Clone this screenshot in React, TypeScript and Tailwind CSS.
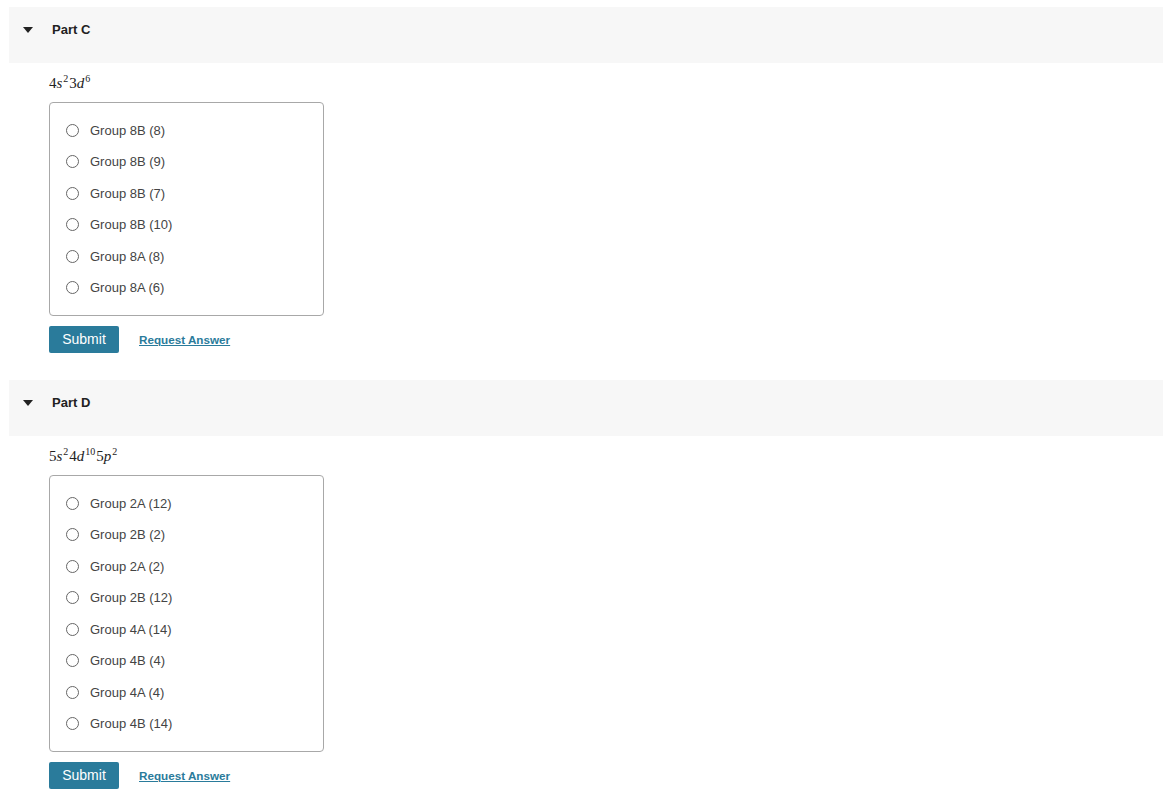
import React from "react";

type Part = {
  label: string;
  formula: React.ReactNode;
  options: string[];
};

const I = ({ children }: { children: React.ReactNode }) => <span className="italic">{children}</span>;
const Sup = ({ children }: { children: React.ReactNode }) => (
  <span className="text-[10px] relative -top-[6px] ml-[1px] mr-[1px] leading-none">{children}</span>
);

const parts: Part[] = [
  {
    label: "Part C",
    formula: (
      <>
        4<I>s</I>
        <Sup>2</Sup>3<I>d</I>
        <Sup>6</Sup>
      </>
    ),
    options: ["Group 8B (8)", "Group 8B (9)", "Group 8B (7)", "Group 8B (10)", "Group 8A (8)", "Group 8A (6)"],
  },
  {
    label: "Part D",
    formula: (
      <>
        5<I>s</I>
        <Sup>2</Sup>4<I>d</I>
        <Sup>10</Sup>5<I>p</I>
        <Sup>2</Sup>
      </>
    ),
    options: [
      "Group 2A (12)",
      "Group 2B (2)",
      "Group 2A (2)",
      "Group 2B (12)",
      "Group 4A (14)",
      "Group 4B (4)",
      "Group 4A (4)",
      "Group 4B (14)",
    ],
  },
];

function PartBlock({ part }: { part: Part }) {
  return (
    <div className="mb-[27px]">
      <div className="h-[56px] bg-[#f7f7f7] flex items-start pt-[15px]">
        <div className="h-[16px] flex items-center">
          <svg width="10" height="6" viewBox="0 0 10 6" className="ml-[14px] mr-[19px]">
            <path d="M0 0 L10 0 L5 6 Z" fill="#222" />
          </svg>
          <span className="text-[13px] leading-[16px] font-bold text-[#222]">{part.label}</span>
        </div>
      </div>
      <div className="pl-[40px]">
        <div className="h-[20px] mt-[10px] mb-[9px] flex items-center text-[15px] text-[#222] font-['Liberation_Serif',serif]">
          <span>{part.formula}</span>
        </div>
        <div className="w-[275px] border border-[#a8a8a8] rounded-[4px] pt-[11.5px] pb-[11.5px] pl-[16px]">
          {part.options.map((o) => (
            <label key={o} className="h-[31.5px] flex items-center cursor-pointer">
              <span className="w-[13px] h-[13px] rounded-full border border-[#666] bg-white" />
              <span className="ml-[11px] text-[13px] text-[#444]">{o}</span>
            </label>
          ))}
        </div>
        <div className="flex items-center mt-[10px]">
          <button className="w-[70px] h-[27px] bg-[#2a7b9b] text-white text-[14px] rounded-[2px]">Submit</button>
          <a href="#" className="ml-[20px] text-[11.7px] font-bold text-[#2a7b9b] underline">
            Request Answer
          </a>
        </div>
      </div>
    </div>
  );
}

export default function App() {
  return (
    <div className="min-h-screen bg-white pt-[7px] pl-[9px] font-['Liberation_Sans',Arial,sans-serif]">
      {parts.map((p) => (
        <PartBlock key={p.label} part={p} />
      ))}
    </div>
  );
}
